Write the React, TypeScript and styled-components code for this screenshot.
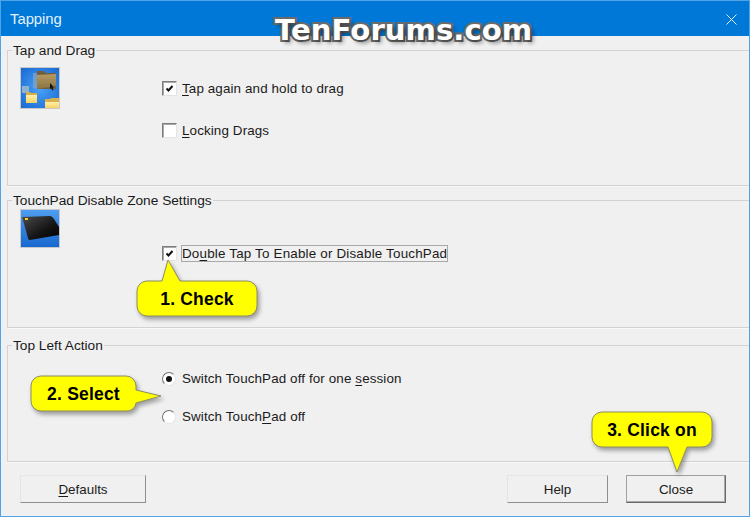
import styled, { createGlobalStyle } from "styled-components";
import type { ReactNode } from "react";

const GlobalStyle = createGlobalStyle`
  html, body {
    margin: 0;
    padding: 0;
    background: #f0f0f0;
  }
`;

const DialogWindow = styled.div`
  position: relative;
  box-sizing: border-box;
  width: 750px;
  height: 517px;
  display: flex;
  flex-direction: column;
  overflow: hidden;
  background: #f0f0f0;
  border: 1px solid #4fa3e6;
  font-family: "Liberation Sans", Arial, sans-serif;
  font-size: 13.4px;
  color: #1a1a1a;
`;

const TitleBar = styled.div`
  flex: none;
  height: 35px;
  display: flex;
  align-items: center;
  justify-content: space-between;
  padding: 0 12px 0 9px;
  background: #0078d7;
  color: #e6f1fb;
  font-size: 14.8px;
`;

const CloseGlyph = styled.svg`
  width: 11px;
  height: 11px;
  margin-top: 1px;
`;

const Watermark = styled.div`
  position: absolute;
  left: 274px;
  top: 11px;
  font-family: "DejaVu Sans", Verdana, sans-serif;
  font-size: 29.2px;
  font-weight: 700;
  line-height: 36px;
  color: #fff;
  -webkit-text-stroke: 4px #6c6c6c;
  paint-order: stroke fill;
  text-shadow: 3px 3px 4px rgba(0, 0, 0, 0.45);
`;

const Content = styled.div`
  flex: 1;
  display: flex;
  flex-direction: column;
  padding: 7px 0 0 6px;
`;

const Group = styled.fieldset<{ $height: number; $gap: number }>`
  box-sizing: border-box;
  height: ${(p) => p.$height}px;
  margin: 0 -12px ${(p) => p.$gap}px 0;
  padding: 0 0 0 12px;
  min-inline-size: 0;
  border: 1px solid #d2d2d2;
  box-shadow: 0 1px 0 #f8f8f8;
  display: grid;
  grid-template-columns: 142px 1fr;
`;

const GroupTitle = styled.legend`
  margin-left: -8px;
  padding: 0 1px;
  font-size: 13.7px;
  line-height: 15px;
`;

const Thumb = styled.svg<{ $top: number; $height: number }>`
  display: block;
  width: 40px;
  height: ${(p) => p.$height}px;
  margin-top: ${(p) => p.$top}px;
`;

const Options = styled.div<{ $top: number; $gap: number }>`
  grid-column: 2;
  display: flex;
  flex-direction: column;
  align-items: flex-start;
  gap: ${(p) => p.$gap}px;
  padding-top: ${(p) => p.$top}px;
`;

const Row = styled.div`
  display: flex;
  align-items: center;
  height: 17px;
  gap: 4px;
`;

const CheckBox = styled.span`
  box-sizing: border-box;
  flex: none;
  width: 15px;
  height: 15px;
  display: flex;
  align-items: center;
  justify-content: center;
  background: #fff;
  border: 1px solid;
  border-color: #7d7d7d #e4e4e4 #e4e4e4 #7d7d7d;
  box-shadow: inset 1px 1px 0 #a8a8a8;
`;

const Radio = styled.span`
  box-sizing: border-box;
  flex: none;
  width: 14px;
  height: 14px;
  margin-right: 1px;
  display: flex;
  align-items: center;
  justify-content: center;
  border-radius: 50%;
  background: #fff;
  border: 1px solid;
  border-color: #747474 #e6e6e6 #e6e6e6 #747474;
`;

const RadioDot = styled.span`
  width: 6px;
  height: 6px;
  border-radius: 50%;
  background: #111;
`;

const Label = styled.span<{ $focused?: boolean }>`
  letter-spacing: ${(p) => (p.$focused ? 0.19 : 0.12)}px;
  line-height: 15px;
  padding: 0 ${(p) => (p.$focused ? 0 : 1)}px;
  ${(p) => (p.$focused ? "border: 1px solid #a8a8a8;" : "")}
`;

const Key = styled.span`
  text-decoration: underline;
  text-underline-offset: 2px;
`;

const Footer = styled.div`
  display: flex;
  align-items: flex-start;
  padding: 13px 0 0 13px;
`;

const PushButton = styled.div<{ $width: number; $gap?: number; $isDefault?: boolean }>`
  box-sizing: border-box;
  width: ${(p) => p.$width}px;
  height: 28px;
  margin-right: ${(p) => p.$gap ?? 0}px;
  display: flex;
  align-items: center;
  justify-content: center;
  background: #f0f0f0;
  border: 1px solid;
  border-color: ${(p) =>
    p.$isDefault
      ? "#a0a0a0 #696969 #696969 #a0a0a0"
      : "#e4e4e4 #8e8e8e #8e8e8e #e4e4e4"};
  box-shadow: ${(p) => (p.$isDefault ? "inset -1px -1px 0 #a8a8a8" : "none")};
`;

const CalloutBox = styled.div<{ $x: number; $y: number; $w: number; $h: number }>`
  position: absolute;
  left: ${(p) => p.$x}px;
  top: ${(p) => p.$y}px;
  width: ${(p) => p.$w}px;
  height: ${(p) => p.$h}px;
  display: flex;
  align-items: center;
  justify-content: center;
`;

const CalloutShape = styled.svg`
  position: absolute;
  left: 0;
  top: 0;
  width: 100%;
  height: 100%;
  overflow: visible;
  filter: drop-shadow(2px 3px 2px rgba(0, 0, 0, 0.35));
`;

const CalloutText = styled.span`
  position: relative;
  margin-top: 2px;
  font-size: 17.5px;
  font-weight: 700;
  color: #000;
  letter-spacing: 0.2px;
`;

const Callout = ({
  x,
  y,
  w,
  h,
  path,
  children,
}: {
  x: number;
  y: number;
  w: number;
  h: number;
  path: string;
  children: ReactNode;
}) => (
  <CalloutBox $x={x} $y={y} $w={w} $h={h}>
    <CalloutShape viewBox={`0 0 ${w} ${h}`}>
      <path d={path} fill="#ffff00" stroke="#8c8c62" strokeWidth="1" />
    </CalloutShape>
    <CalloutText>{children}</CalloutText>
  </CalloutBox>
);

const CheckMark = () => (
  <svg width="11" height="11" viewBox="0 0 11 11">
    <path d="M2.500 5.500l2 2L8.500 3" stroke="#111" strokeWidth="2" fill="none" />
  </svg>
);

const FolderIcon = () => (
  <Thumb $top={9} $height={42} viewBox="0 0 40 42">
    <defs>
      <radialGradient id="folderBg" cx="0.5" cy="0.5" r="0.75">
        <stop offset="0" stopColor="#4aa2f5" />
        <stop offset="1" stopColor="#1563d0" />
      </radialGradient>
      <linearGradient id="folderFront" x1="0" y1="0" x2="0" y2="1">
        <stop offset="0" stopColor="#b59b62" />
        <stop offset="1" stopColor="#8a7343" />
      </linearGradient>
      <linearGradient id="folderYellow" x1="0" y1="0" x2="0" y2="1">
        <stop offset="0" stopColor="#fff0a6" />
        <stop offset="1" stopColor="#f4d264" />
      </linearGradient>
    </defs>
    <rect x="0.5" y="0.5" width="39" height="41" fill="url(#folderBg)" stroke="#c8c8c8" />
    <path d="M13 6h5v15h-5z" fill="#8ea6bd" opacity="0.65" />
    <path d="M17 4h7l2 2h10v16H17z" fill="#6f5f40" />
    <path d="M17 8l19-1v12l-19 3z" fill="url(#folderFront)" />
    <path d="M30 16l4 4.500-1.600 0 1.100 2.500-1.300 .5-1.100-2.500-1.100 1.100z" fill="#111" />
    <rect x="2" y="19" width="7" height="7" fill="#8fb2cf" />
    <path d="M6 25h4l1 1h6v10H6z" fill="#d8ae48" />
    <path d="M6 28h11v8H6z" fill="url(#folderYellow)" />
    <path d="M25 32h5l1 -1h8v10H25z" fill="#d8b052" />
    <path d="M25 35h14v6H25z" fill="url(#folderYellow)" />
  </Thumb>
);

const TouchpadIcon = () => (
  <Thumb $top={1} $height={39} viewBox="0 0 40 39">
    <defs>
      <linearGradient id="padBg" x1="0" y1="0" x2="0" y2="1">
        <stop offset="0" stopColor="#4e9ff2" />
        <stop offset="1" stopColor="#1867cf" />
      </linearGradient>
      <linearGradient id="padFace" x1="0" y1="0" x2="1" y2="1">
        <stop offset="0" stopColor="#4c4c4c" />
        <stop offset="0.6" stopColor="#141414" />
        <stop offset="1" stopColor="#000" />
      </linearGradient>
    </defs>
    <rect x="0.5" y="0.5" width="39" height="38" fill="url(#padBg)" stroke="#c8c8c8" />
    <path d="M2 8L30 7Q32 7 34 10L39 18V26L10 31Q8 31 8 29Z" fill="url(#padFace)" />
    <rect x="5" y="9" width="3" height="2" fill="#f4d21c" />
  </Thumb>
);

const App = () => (
  <>
    <GlobalStyle />
    <DialogWindow>
      <TitleBar>
        <span>Tapping</span>
        <CloseGlyph viewBox="0 0 11 11">
          <path d="M.5.5l10 10M10.500.5l-10 10" stroke="#e6f1fb" strokeWidth="1" fill="none" />
        </CloseGlyph>
      </TitleBar>
      <Content>
        <Group $height={143} $gap={7}>
          <GroupTitle>Tap and Drag</GroupTitle>
          <FolderIcon />
          <Options $top={22} $gap={25}>
            <Row>
              <CheckBox>
                <CheckMark />
              </CheckBox>
              <Label>
                <Key>T</Key>ap again and hold to drag
              </Label>
            </Row>
            <Row>
              <CheckBox />
              <Label>
                <Key>L</Key>ocking Drags
              </Label>
            </Row>
          </Options>
        </Group>
        <Group $height={135} $gap={10}>
          <GroupTitle>TouchPad Disable Zone Settings</GroupTitle>
          <TouchpadIcon />
          <Options $top={37} $gap={0}>
            <Row>
              <CheckBox>
                <CheckMark />
              </CheckBox>
              <Label $focused>
                Do<Key>u</Key>ble Tap To Enable or Disable TouchPad
              </Label>
            </Row>
          </Options>
        </Group>
        <Group $height={124} $gap={0}>
          <GroupTitle>Top Left Action</GroupTitle>
          <Options $top={17} $gap={21}>
            <Row>
              <Radio>
                <RadioDot />
              </Radio>
              <Label>
                Switch TouchPad off for one <Key>s</Key>ession
              </Label>
            </Row>
            <Row>
              <Radio />
              <Label>
                Switch Touch<Key>P</Key>ad off
              </Label>
            </Row>
          </Options>
        </Group>
        <Footer>
          <PushButton $width={126} $gap={361}>
            <span>
              <Key>D</Key>efaults
            </span>
          </PushButton>
          <PushButton $width={101} $gap={18}>
            Help
          </PushButton>
          <PushButton $width={100} $isDefault>
            Close
          </PushButton>
        </Footer>
      </Content>
      <Watermark>TenForums.com</Watermark>
      <Callout
        x={136}
        y={280}
        w={120}
        h={35}
        path="M10 0H25L31-21L43 0H110A10 10 0 0 1 120 10V25A10 10 0 0 1 110 35H10A10 10 0 0 1 0 25V10A10 10 0 0 1 10 0Z"
      >
        1. Check
      </Callout>
      <Callout
        x={30}
        y={375}
        w={105}
        h={35}
        path="M10 0H95A10 10 0 0 1 105 10V14L130 20L105 27A9 9 0 0 1 95 35H10A10 10 0 0 1 0 25V10A10 10 0 0 1 10 0Z"
      >
        2. Select
      </Callout>
      <Callout
        x={591}
        y={411}
        w={120}
        h={35}
        path="M10 0H110A10 10 0 0 1 120 10V25A10 10 0 0 1 110 35H95L85 60L76 35H10A10 10 0 0 1 0 25V10A10 10 0 0 1 10 0Z"
      >
        3. Click on
      </Callout>
    </DialogWindow>
  </>
);

export default App;
